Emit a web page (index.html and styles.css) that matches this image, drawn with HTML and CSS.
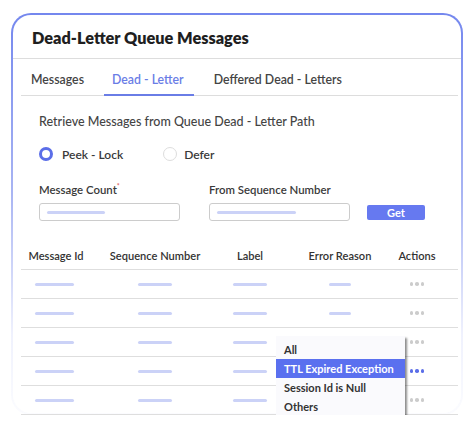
FILE: index.html
```html
<!DOCTYPE html>
<html lang="en">

<head>
    <meta charset="UTF-8">
    <meta name="viewport" content="width=device-width, initial-scale=1.0">
    <title>Dead-Letter Queue Messages</title>
    <link rel="stylesheet" href="styles.css">
</head>

<body>
    <div class="card-frame">
        <div class="card">
            <div class="card-header">
                <h1>Dead-Letter Queue Messages</h1>
            </div>
            <div class="card-body">
                <div class="tabs">
                    <div class="tab">Messages</div>
                    <div class="tab active">Dead - Letter</div>
                    <div class="tab">Deffered Dead - Letters</div>
                </div>

                <div class="retrieve">
                    <p class="section-title">Retrieve Messages from Queue Dead - Letter Path</p>
                    <div class="radios">
                        <label class="radio checked"><span class="dot"></span>Peek - Lock</label>
                        <label class="radio"><span class="dot"></span>Defer</label>
                    </div>
                    <div class="fields">
                        <div class="field">
                            <span class="field-label">Message Count<sup>*</sup></span>
                            <div class="input"><span class="bar" style="width: 58px"></span></div>
                        </div>
                        <div class="field">
                            <span class="field-label">From Sequence Number</span>
                            <div class="input"><span class="bar" style="width: 79px"></span></div>
                        </div>
                        <button class="get-btn">Get</button>
                    </div>
                </div>

                <div class="table">
                    <div class="row head">
                        <span>Message Id</span>
                        <span>Sequence Number</span>
                        <span>Label</span>
                        <span>Error Reason</span>
                        <span>Actions</span>
                    </div>
                    <div class="row">
                        <span class="bar w1"></span><span class="bar w2"></span><span class="bar w2"></span><span class="bar w3"></span>
                        <span class="more"><i></i><i></i><i></i></span>
                    </div>
                    <div class="row">
                        <span class="bar w1"></span><span class="bar w2"></span><span class="bar w2"></span><span class="bar w3"></span>
                        <span class="more"><i></i><i></i><i></i></span>
                    </div>
                    <div class="row">
                        <span class="bar w1"></span><span class="bar w2"></span><span class="bar w2"></span><span class="bar w3"></span>
                        <span class="more"><i></i><i></i><i></i></span>
                    </div>
                    <div class="row">
                        <span class="bar w1"></span><span class="bar w2"></span><span class="bar w2"></span><span class="bar w3"></span>
                        <span class="more open"><i></i><i></i><i></i></span>
                    </div>
                    <div class="row">
                        <span class="bar w1"></span><span class="bar w2"></span><span class="bar w2"></span><span class="bar w3"></span>
                        <span class="more"><i></i><i></i><i></i></span>
                    </div>

                    <!-- error reason filter menu -->
                    <ul class="menu">
                        <li>All</li>
                        <li class="selected">TTL Expired Exception</li>
                        <li>Session Id is Null</li>
                        <li>Others</li>
                    </ul>
                </div>
            </div>
        </div>
    </div>
</body>

</html>
```

FILE: styles.css
```css
body {
    font-family: Lato, "Open Sans", sans-serif;
    margin: 0;
    padding: 0;
    background-color: #ffffff;
    color: #333333;
}

/* gradient border that fades towards the bottom */
.card-frame {
    margin: 13px 11px 0;
    width: 452px;
    height: 402px;
    padding: 2px;
    box-sizing: border-box;
    border-radius: 20px;
    background: linear-gradient(to bottom, #7487ee 0%, #a9b5f3 45%, rgba(210, 216, 250, 0.35) 80%, rgba(235, 238, 252, 0.2) 100%);
}

.card {
    background-color: #ffffff;
    border-radius: 18px;
    height: 100%;
}

.card-header {
    height: 43px;
    border-bottom: 1px solid #dddddd;
    display: flex;
    align-items: center;
    padding-left: 19px;
}

.card-header h1 {
    margin: 0;
    font-size: 16.3px;
    font-weight: 800;
    color: #1f1f1f;
    padding-top: 2px;
}

.card-body {
    padding: 0 3px 0 8px;
}

.tabs {
    display: flex;
    border-bottom: 1px solid #dddddd;
    padding-top: 11px;
}

.tab {
    font-size: 12.3px;
    font-weight: 600;
    color: #444444;
    line-height: 20px;
    padding: 0 10px 4px;
    margin-right: 10px;
    border-bottom: 2px solid transparent;
    margin-bottom: -1px;
}

.tab.active {
    color: #6a7de6;
    border-bottom-color: #6a7de6;
    padding: 0 10px 4px 8px;
}

.retrieve {
    padding-left: 18px;
}

.section-title {
    margin: 17px 0 0;
    font-size: 12.5px;
    font-weight: 500;
    line-height: 18px;
    color: #444444;
}

.radios {
    display: flex;
    margin-top: 13px;
    height: 20px;
    align-items: center;
}

.radio {
    display: flex;
    align-items: center;
    font-size: 12px;
    font-weight: 600;
    color: #3a3a3a;
    margin-right: 40px;
}

.radio .dot {
    width: 14px;
    height: 14px;
    border-radius: 50%;
    border: 1px solid #dddddd;
    box-sizing: border-box;
    margin-right: 7px;
}

.radio.checked .dot {
    border: 3px solid #5b6ee8;
    margin-right: 9px;
}

.fields {
    display: flex;
    align-items: flex-end;
    margin-top: 18px;
}

.field {
    display: flex;
    flex-direction: column;
    margin-right: 29px;
}

.field-label {
    font-size: 11.4px;
    font-weight: 600;
    color: #3a3a3a;
    line-height: 16px;
}

.field-label sup {
    color: #e05555;
    font-size: 7px;
    vertical-align: top;
    line-height: 8px;
}

.input {
    margin-top: 5px;
    width: 141px;
    height: 18px;
    border: 1px solid #cccccc;
    border-radius: 3px;
    box-sizing: border-box;
    display: flex;
    align-items: center;
    padding-left: 7px;
}

.bar {
    display: block;
    height: 3px;
    border-radius: 2px;
    background-color: #cbd2f7;
}

.get-btn {
    margin: 0 0 1px -12px;
    width: 58px;
    height: 15px;
    border: none;
    border-radius: 2px;
    background-color: #6679f0;
    color: #ffffff;
    font-family: inherit;
    font-size: 11px;
    font-weight: 700;
    padding: 0;
    cursor: pointer;
}

.table {
    position: relative;
    margin-top: 22px;
}

.row {
    display: grid;
    grid-template-columns: 70px 128px 62px 118px 36px;
    justify-items: center;
    align-items: center;
    height: 29px;
    border-bottom: 1px solid #dedede;
    box-sizing: border-box;
}

.row.head {
    height: 27px;
    font-size: 11.1px;
    font-weight: 600;
    color: #333333;
    padding-bottom: 2px;
}

.bar.w1 {
    width: 39px;
    margin-left: -3px;
}

.bar.w2 {
    width: 34px;
}

.bar.w3 {
    width: 22px;
}

.more {
    display: flex;
    gap: 2px;
}

.more i {
    width: 3.5px;
    height: 3.5px;
    border-radius: 50%;
    background-color: #cccccc;
}

.more.open i {
    background-color: #5b6ee8;
}

.menu {
    position: absolute;
    left: 255px;
    top: 93px;
    width: 129px;
    margin: 0;
    padding: 4px 0 2px;
    list-style: none;
    background-color: #fafafd;
    box-shadow: 2px 2px 2px rgba(0, 0, 0, 0.45);
}

.menu li {
    height: 19px;
    line-height: 19px;
    padding-left: 8px;
    font-size: 11px;
    font-weight: 700;
    color: #333333;
}

.menu li.selected {
    background-color: #5a70ef;
    color: #ffffff;
}
```
